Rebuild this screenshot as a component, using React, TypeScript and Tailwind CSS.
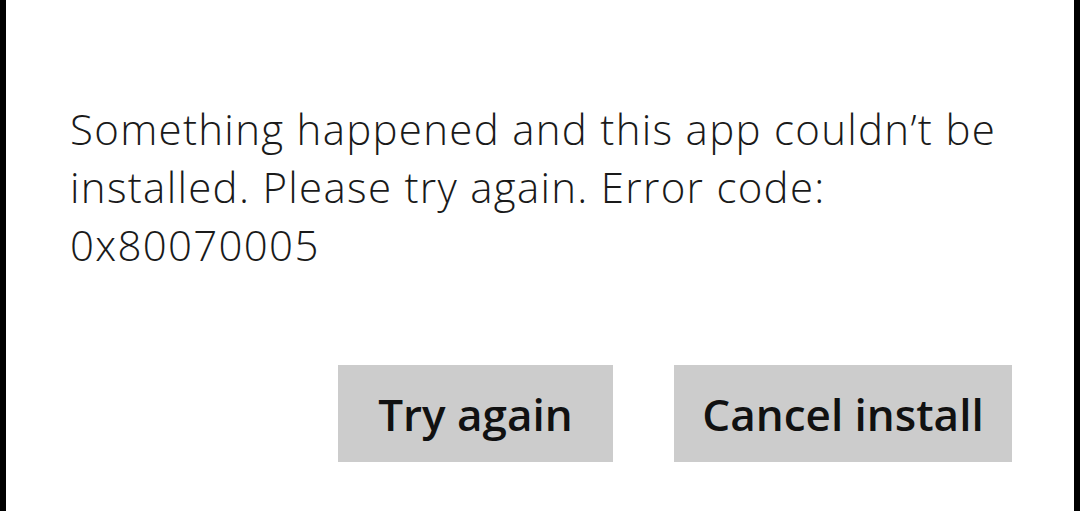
export default function App() {
  return (
    <div className="w-[1080px] h-[511px] bg-black flex px-[6px]">
      <div className="flex-1 bg-white flex flex-col pl-[64px] pr-[62px] pt-[100px]" style={{ fontFamily: '"Open Sans", sans-serif' }}>
        <div className="text-[42px] leading-[58px] tracking-[1.3px] text-[#1a1a1a] font-light whitespace-nowrap">
          <div>Something happened and this app couldn’t be</div>
          <div>installed. Please try again. Error code:</div>
          <div>0x80070005</div>
        </div>
        <div className="flex justify-end gap-[61px] mt-[91px]">
          <button className="w-[275px] h-[97px] bg-[#cccccc] text-[44px] font-semibold text-[#111] flex items-center justify-center">Try again</button>
          <button className="w-[338px] h-[97px] bg-[#cccccc] text-[44px] font-semibold text-[#111] flex items-center justify-center">Cancel install</button>
        </div>
      </div>
    </div>
  );
}
